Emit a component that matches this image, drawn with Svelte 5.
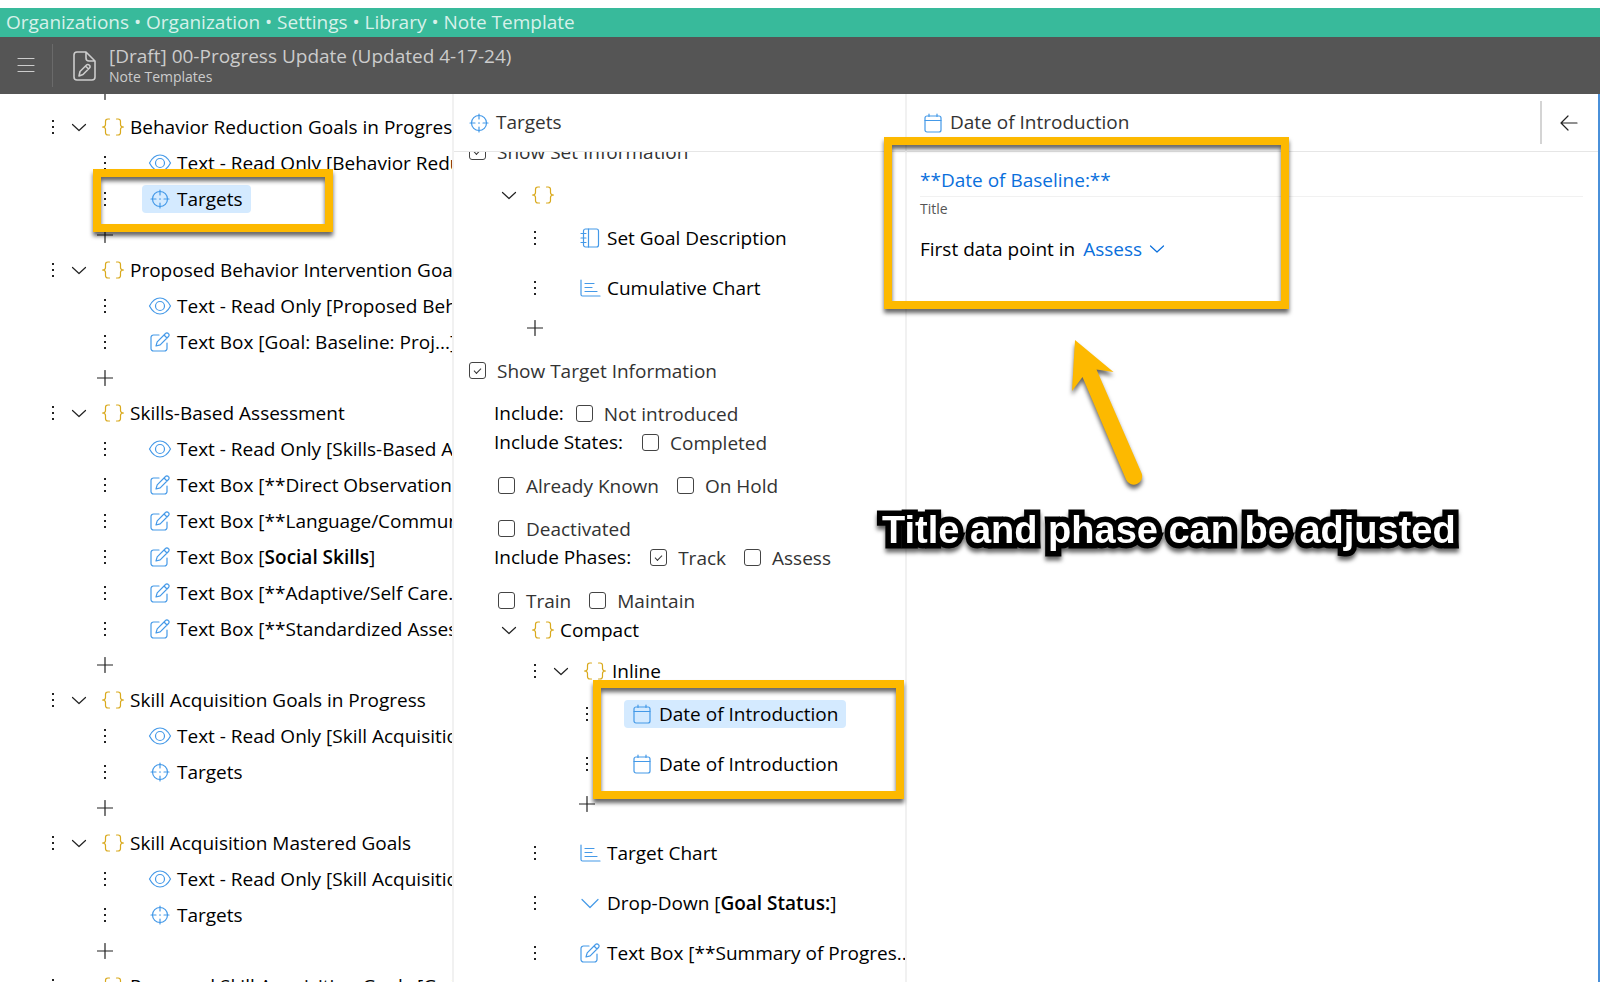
<script>
  const outline = [
    {
      title: 'Behavior Reduction Goals in Progress',
      items: [
        { icon: 'eye', text: 'Text - Read Only [Behavior Reduction Goals]' },
        { icon: 'target', text: 'Targets', selected: true },
      ],
    },
    {
      title: 'Proposed Behavior Intervention Goals',
      items: [
        { icon: 'eye', text: 'Text - Read Only [Proposed Behavior Goals]' },
        { icon: 'edit', text: 'Text Box [Goal: Baseline: Proj...]' },
      ],
    },
    {
      title: 'Skills-Based Assessment',
      items: [
        { icon: 'eye', text: 'Text - Read Only [Skills-Based Assessment]' },
        { icon: 'edit', text: 'Text Box [**Direct Observation...]' },
        { icon: 'edit', text: 'Text Box [**Language/Commun...]' },
        { icon: 'edit', text: 'Text Box [', strong: 'Social Skills', tail: ']' },
        { icon: 'edit', text: 'Text Box [**Adaptive/Self Care...]' },
        { icon: 'edit', text: 'Text Box [**Standardized Asses...]' },
      ],
    },
    {
      title: 'Skill Acquisition Goals in Progress',
      items: [
        { icon: 'eye', text: 'Text - Read Only [Skill Acquisition Goals]' },
        { icon: 'target', text: 'Targets' },
      ],
    },
    {
      title: 'Skill Acquisition Mastered Goals',
      items: [
        { icon: 'eye', text: 'Text - Read Only [Skill Acquisition Goals]' },
        { icon: 'target', text: 'Targets' },
      ],
    },
    { title: 'Proposed Skill Acquisition Goals [G...]', items: [] },
  ];

  const setItems = [
    { icon: 'notebook', text: 'Set Goal Description' },
    { icon: 'chart', text: 'Cumulative Chart' },
  ];
  const inlineItems = [
    { icon: 'calendar', text: 'Date of Introduction', selected: true },
    { icon: 'calendar', text: 'Date of Introduction' },
  ];
  const targetItems = [
    { icon: 'chart', text: 'Target Chart' },
    { icon: 'down', text: 'Drop-Down [', strong: 'Goal Status:', tail: ']' },
    { icon: 'edit', text: 'Text Box [**Summary of Progres...]' },
  ];

  let showSet = $state(true);
  let showTarget = $state(true);
  let include = $state([{ label: 'Not introduced', on: false }]);
  let states = $state([
    { label: 'Completed', on: false },
    { label: 'Already Known', on: false },
    { label: 'On Hold', on: false },
    { label: 'Deactivated', on: false },
  ]);
  let phases = $state([
    { label: 'Track', on: true },
    { label: 'Assess', on: false },
    { label: 'Train', on: false },
    { label: 'Maintain', on: false },
  ]);
  let title = $state('**Date of Baseline:**');
  let phase = $state('Assess');
</script>

{#snippet icon(name)}
  <svg class="icon {name}" viewBox="0 0 24 24" width="24" height="24" aria-hidden="true">
    {#if name === 'eye'}
      <path d="M1.500 12C4 7.200 7.800 4 12 4S20 7.200 22.500 12C20 16.800 16.200 20 12 20S4 16.800 1.500 12Z" />
      <circle cx="12" cy="12" r="4.500" />
    {:else if name === 'target'}
      <circle cx="12" cy="12" r="7.500" />
      <path d="M12 3v5M12 16v5M3 12h5M16 12h5M11.500 12h1" />
    {:else if name === 'edit'}
      <path d="M11 5H5.500a2.500 2.500 0 0 0-2.500 2.500v11A2.500 2.500 0 0 0 5.500 21h11a2.500 2.500 0 0 0 2.500-2.500V13" />
      <path d="M8 16l1.200-4.200 8.300-8.300a1.900 1.900 0 0 1 2.800 0l.200.2a1.900 1.900 0 0 1 0 2.800l-8.300 8.300L8 16ZM16 5l3 3" />
    {:else if name === 'braces'}
      <path d="M8.500 4H7C5 4 4.500 5 4.500 6.500v3C4.500 11 3.500 12 1.500 12c2 0 3 1 3 2.500v3C4.500 19 5 20 7 20h1.500M15.500 4H17c2 0 2.500 1 2.500 2.500v3c0 1.500 1 2.500 3 2.500-2 0-3 1-3 2.500v3c0 1.500-.500 2.500-2.500 2.500h-1.500" />
    {:else if name === 'notebook'}
      <rect x="5.500" y="3" width="15" height="18" rx="2" />
      <path d="M10.500 3v18M3 7.500h5M3 12h5M3 16.500h5" />
    {:else if name === 'chart'}
      <path d="M3 4v14.500a1.500 1.500 0 0 0 1.500 1.500H22M7 7.500h9M7 11.500h7M7 15.500h12" />
    {:else if name === 'calendar'}
      <rect x="4" y="5" width="16" height="16" rx="2" />
      <path d="M4 9.500h16M8 3v2.500M16 3v2.500" />
    {:else if name === 'down'}
      <path d="M4 8.500l8 8 8-8" />
    {/if}
  </svg>
{/snippet}

{#snippet dots()}
  <button class="mini" aria-label="Row menu">
    <svg viewBox="0 0 16 16" width="16" height="16">
      <path class="fill" d="M7 1h2v2H7zM7 7h2v2H7zM7 13h2v2H7z" />
    </svg>
  </button>
{/snippet}

{#snippet caret()}
  <button class="mini caret" aria-label="Collapse">
    <svg viewBox="0 0 16 16" width="16" height="16"><path d="M1.500 5.500L8 11.500l6.500-6" /></svg>
  </button>
{/snippet}

{#snippet plus()}
  <div class="plus">
    <button class="mini" aria-label="Add">
      <svg viewBox="0 0 16 16" width="16" height="16"><path d="M8 .5v15M.5 8h15" /></svg>
    </button>
  </div>
{/snippet}

{#snippet leaf(item)}
  <li class="row leaf">
    {@render dots()}
    <button class="label" class:selected={item.selected}>
      {@render icon(item.icon)}
      <span>{item.text}{#if item.strong}<strong>{item.strong}</strong>{item.tail}{/if}</span>
    </button>
  </li>
{/snippet}

{#snippet head(text, menu)}
  <div class="row group">
    {#if menu}{@render dots()}{:else}<span class="mini"></span>{/if}
    {@render caret()}
    <button class="label" aria-label={text || 'Group'}>
      {@render icon('braces')}
      <span>{text}</span>
    </button>
  </div>
{/snippet}

{#snippet checks(name, list)}
  <div class="checks" class:many={list.length > 1} role="group" aria-label={name}>
    <span class="name">{name}</span>
    {#each list as entry}
      <label class="check"><input type="checkbox" bind:checked={entry.on} />{entry.label}</label>
    {/each}
  </div>
{/snippet}

<div class="app">
  <nav class="crumbs">Organizations • Organization • Settings • Library • Note Template</nav>
  <header class="bar">
    <button class="menu" aria-label="Menu">
      <svg viewBox="0 0 18 18" width="18" height="18"><path d="M1 1.500h16M1 8.500h16M1 14.500h16" /></svg>
    </button>
    <svg class="doc" viewBox="0 0 24 32" width="24" height="32" aria-hidden="true">
      <path d="M14 2H5a3 3 0 0 0-3 3v22a3 3 0 0 0 3 3h15a3 3 0 0 0 3-3V11ZM14 2v6a3 3 0 0 0 3 3h6" />
      <path d="M7 26l1-4.500 6.500-6.500a1.800 1.800 0 0 1 2.600 0l.400.400a1.800 1.800 0 0 1 0 2.600L11 24.500 7 26ZM13.500 16l3 3" />
    </svg>
    <div class="heading">
      <h1>[Draft] 00-Progress Update (Updated 4-17-24)</h1>
      <p>Note Templates</p>
    </div>
  </header>

  <main>
    <section class="outline">
      <div class="scrolled">
        <div class="children">{@render plus()}</div>
        {#each outline as group}
          {@render head(group.title, true)}
          <ul class="children">
            {#each group.items as item}{@render leaf(item)}{/each}
          </ul>
          <div class="children">{@render plus()}</div>
        {/each}
      </div>
    </section>

    <section class="panel targets">
      <header>{@render icon('target')}<h2>Targets</h2></header>
      <div class="body">
        <div class="scrolled">
          <label class="check top"><input type="checkbox" bind:checked={showSet} />Show Set Information</label>
          <div class="tree spaced">
            {@render head('', false)}
            <ul class="children">{#each setItems as item}{@render leaf(item)}{/each}</ul>
            <div class="children">{@render plus()}</div>
          </div>
          <label class="check top"><input type="checkbox" bind:checked={showTarget} />Show Target Information</label>
          <div class="filters">
            {@render checks('Include:', include)}
            {@render checks('Include States:', states)}
            {@render checks('Include Phases:', phases)}
          </div>
          <div class="tree">
            {@render head('Compact', false)}
            <div class="children nested">
              {@render head('Inline', true)}
              <ul class="children">{#each inlineItems as item}{@render leaf(item)}{/each}</ul>
              <div class="children">{@render plus()}</div>
            </div>
            <ul class="children rest">{#each targetItems as item}{@render leaf(item)}{/each}</ul>
          </div>
        </div>
      </div>
    </section>

    <section class="panel details">
      <header>
        {@render icon('calendar')}<h2>Date of Introduction</h2>
        <button class="back" aria-label="Back">
          <svg viewBox="0 0 18 18" width="18" height="18"><path d="M17 9H1M8 2L1 9l7 7" /></svg>
        </button>
      </header>
      <div class="form">
        <input id="title" type="text" bind:value={title} />
        <label for="title">Title</label>
        <div class="phase">
          <label for="phase">First data point in</label>
          <select id="phase" bind:value={phase}>
            <option>Track</option>
            <option>Assess</option>
            <option>Train</option>
            <option>Maintain</option>
          </select>
          <svg viewBox="0 0 16 16" width="16" height="16" aria-hidden="true"><path d="M1.500 5L8 11l6.500-6" /></svg>
        </div>
      </div>
    </section>
  </main>

  <div class="mark one"></div>
  <div class="mark two"></div>
  <div class="mark three"></div>
  <svg class="arrow" viewBox="0 0 72 146" width="72" height="146" aria-hidden="true">
    <path d="M5 0L43.500 32 26.500 29.500 71.500 133A8 8 0 0 1 56 139.500L12.500 37 2 51Z" />
  </svg>
  <p class="caption">Title and phase can be adjusted</p>
</div>

<style>
  :global(body) { margin: 0; background: #fff; }
  .app {
    position: relative;
    display: flex;
    flex-direction: column;
    box-sizing: border-box;
    height: 100vh;
    padding-top: 8px;
    overflow: hidden;
    font: 19px/28px "Open Sans", sans-serif;
    color: #000;
  }
  h1, h2, p, ul { margin: 0; padding: 0; font-weight: 400; list-style: none; }
  button, input, select { font: inherit; color: inherit; background: none; border: 0; padding: 0; margin: 0; }
  svg { display: block; flex: none; fill: none; stroke: currentColor; stroke-width: 1.2; stroke-linecap: round; stroke-linejoin: round; }
  .fill { fill: currentColor; stroke: none; }
  strong { font-weight: 600; }

  .crumbs { flex: none; height: 29px; padding-left: 6px; background: #38ba9b; color: #d7f1ea; white-space: nowrap; }
  .bar { flex: none; display: flex; align-items: center; height: 57px; background: #555; color: #ccc; }
  .menu { display: flex; align-items: center; height: 43px; padding: 0 17px; border-right: 1px solid #6a6a6a; }
  .doc { margin-left: 19px; stroke-width: 1.6; }
  .heading { margin-left: 13px; white-space: nowrap; }
  h1 { font-size: 19px; line-height: 22px; }
  .heading p { font-size: 14px; line-height: 20px; }

  main { flex: 1; min-height: 0; display: grid; grid-template-columns: minmax(0, 452fr) minmax(0, 453fr) minmax(0, 695fr); }
  section { min-width: 0; min-height: 0; overflow: hidden; }
  .outline .scrolled { margin-top: -20px; padding-left: 45px; }
  .row { display: flex; align-items: center; white-space: nowrap; }
  .outline .row { height: 36px; }
  .mini { flex: none; display: block; width: 16px; height: 16px; color: #222; }
  .caret { margin: 0 8px 0 10px; }
  .leaf .label { margin-left: 29px; }
  .label { display: flex; align-items: center; flex: none; height: 28px; gap: 5px; padding: 0 8px 0 6px; border-radius: 4px; }
  .selected { background: #d4eaff; }
  .icon { color: #4499e8; }
  .braces { color: #d9a91c; }
  .children { padding-left: 52px; }
  .plus { display: flex; align-items: center; height: 35px; }

  .panel { display: flex; flex-direction: column; border-left: 2px solid #f1f1f1; }
  .panel header { flex: none; display: flex; align-items: center; box-sizing: border-box; height: 58px; padding-left: 13px; gap: 5px; border-bottom: 1px solid #e6e6e6; color: #333; }
  h2 { font-size: 19px; line-height: 28px; padding-bottom: 2px; }
  .body { flex: 1; min-height: 0; overflow: hidden; }
  .targets .scrolled { margin-top: -15px; }
  .tree { padding-left: 21px; }
  .spaced { padding-top: 14px; }
  .nested { padding-top: 12px; }
  .targets .group { height: 29px; }
  .spaced > .group, .nested > .group { margin-bottom: 4px; }
  .targets .leaf { height: 50px; }
  .targets .plus { height: 29px; }
  .rest { padding-top: 10px; }
  .check { display: flex; align-items: center; height: 29px; gap: 11px; padding: 0 4px; color: #333; white-space: nowrap; }
  .top { padding-left: 15px; }
  .tree + .top { margin-top: 14px; }
  .filters { padding: 14px 8px 0 40px; }
  .checks { display: flex; flex-wrap: wrap; gap: 14px 8px; }
  .many { column-gap: 10px; }
  .many .name { padding-right: 5px; }
  .name { line-height: 29px; }
  .check input { appearance: none; flex: none; display: grid; place-items: center; width: 17px; height: 17px; border: 1px solid #444; border-radius: 3px; }
  .check input:checked::after { content: ""; width: 6px; height: 3px; border: solid #333; border-width: 0 0 1px 1px; rotate: -45deg; translate: 0 -1px; }

  .details { border-right: 2px solid #4a90d9; }
  .details header { padding-left: 14px; }
  .back { display: flex; align-items: center; height: 43px; margin-left: auto; padding: 0 20px 0 18px; border-left: 2px solid #d4d4d4; color: #222; }
  .form { padding: 14px 15px 0 13px; }
  .form > input { box-sizing: border-box; display: block; width: 100%; height: 31px; padding-bottom: 2px; border-bottom: 1px solid #f1f1f1; color: #0a6fdc; }
  .form > label { display: block; font-size: 14px; line-height: 24px; color: #555; }
  .phase { display: flex; align-items: center; margin-top: 14px; }
  .phase select { appearance: none; field-sizing: content; height: 28px; margin: 0 7px 0 8px; color: #0a6fdc; }
  .phase svg { color: #0a6fdc; }

  .mark { position: absolute; box-sizing: border-box; border: 8px solid #fdb900; filter: drop-shadow(0 4px 2px rgba(0, 0, 0, 0.6)); pointer-events: none; }
  .one { left: 93px; top: 169px; width: 240px; height: 63px; }
  .two { left: 884px; top: 137px; width: 405px; height: 172px; }
  .three { left: 593px; top: 680px; width: 311px; height: 119px; }
  .arrow { position: absolute; left: 1070px; top: 340px; fill: #fdb900; stroke: none; overflow: visible; filter: drop-shadow(0 4px 2px rgba(0, 0, 0, 0.6)); }
  .caption {
    position: absolute;
    left: 882px;
    top: 508px;
    font: 700 38px/44px "Liberation Sans", Arial, sans-serif;
    white-space: nowrap;
    color: #fff;
    -webkit-text-stroke: 11px #000;
    paint-order: stroke fill;
    stroke-linejoin: round;
    filter: drop-shadow(0 4px 2px rgba(0, 0, 0, 0.6));
  }
</style>
